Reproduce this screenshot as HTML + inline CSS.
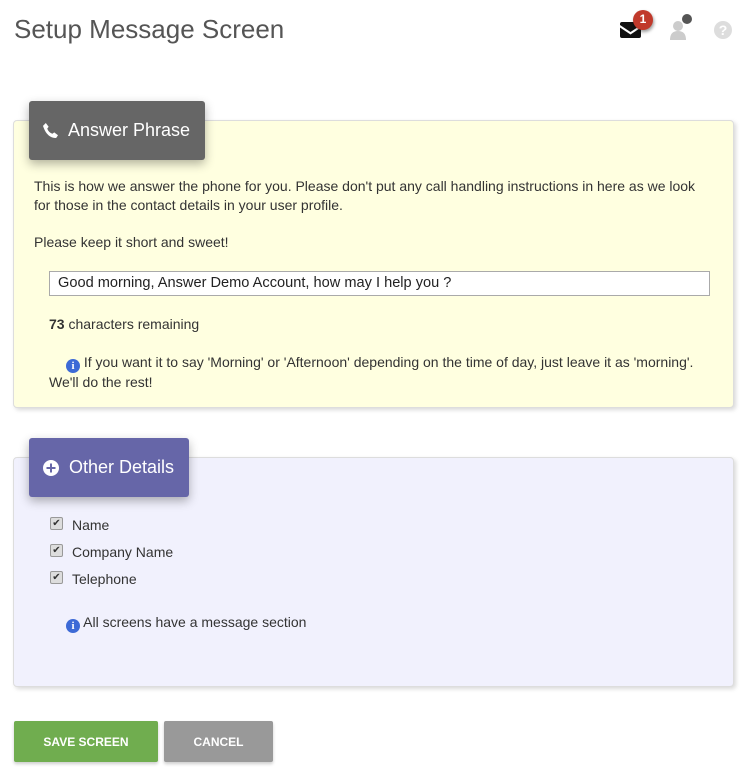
<!DOCTYPE html>
<html><head><style>
body{margin:0;width:742px;height:773px;background:#fff;font-family:"Liberation Sans",sans-serif;color:#333;position:relative;overflow:hidden}
.abs{position:absolute}
h1{position:absolute;left:14px;top:14px;margin:0;font-weight:normal;font-size:26px;color:#555}
.panel{position:absolute;left:13px;width:719px;border:1px solid #ddd;border-radius:4px;box-shadow:2px 2px 4px rgba(0,0,0,.15)}
.hdr{position:absolute;left:29px;color:#fff;font-size:18px;border-radius:3px;box-shadow:0 4px 10px rgba(0,0,0,.3);display:flex;align-items:center;box-sizing:border-box;padding-left:14px}
.t{position:absolute;font-size:14px;line-height:19px;color:#333}
.cb{position:absolute;left:50px;width:11px;height:11px;background:#ddd;border:1px solid #999;border-radius:2px;font-size:10px;line-height:11px;text-align:center;color:#333}
.info{display:inline-block;text-indent:0;width:14px;height:14px;border-radius:50%;background:#3d6ad6;color:#fff;font-size:11px;font-weight:bold;text-align:center;line-height:14px;font-family:"Liberation Serif",serif;vertical-align:-2px}
.btn{position:absolute;top:721px;height:41px;color:#fff;font-size:12px;font-weight:bold;display:flex;align-items:center;justify-content:center;border-radius:2px;box-shadow:0 2px 3px rgba(0,0,0,.2)}
</style></head><body>
<h1>Setup Message Screen</h1>
<svg class="abs" style="left:620px;top:22px" width="21" height="16" viewBox="0 0 21 16"><path d="M0 2 Q0 0 2 0 H19 Q21 0 21 2 V3 L10.5 10 L0 3Z M0 5.5 L10.5 12.5 L21 5.5 V14 Q21 16 19 16 H2 Q0 16 0 14Z" fill="#111"/></svg>
<div class="abs" style="left:633px;top:10px;width:20px;height:20px;border-radius:50%;background:#c0392b;color:#fff;font-size:12px;font-weight:bold;text-align:center;line-height:19px;box-shadow:1px 2px 3px rgba(0,0,0,.4)">1</div>
<svg class="abs" style="left:670px;top:20px" width="18" height="20" viewBox="0 0 18 20"><circle cx="8" cy="6" r="5" fill="#ccc"/><path d="M0 20 Q0 11 8 11 Q16 11 16 20Z" fill="#ccc"/></svg>
<div class="abs" style="left:682px;top:14px;width:10px;height:10px;border-radius:50%;background:#555"></div>
<div class="abs" style="left:714px;top:21px;width:18px;height:18px;border-radius:50%;background:#ddd;color:#fff;font-size:14px;font-weight:bold;text-align:center;line-height:18px">?</div>

<div class="panel" style="top:120px;height:286px;background:#ffffe0"></div>
<div class="hdr" style="top:101px;width:176px;height:59px;background:#666">
<svg width="15" height="15" viewBox="0 0 16 16"><path d="M3 0 L6 4 L4.5 6 Q6 10 10 11.5 L12 10 L16 13 L14 16 Q4 16 0 3Z" fill="#fff"/></svg><span style="margin-left:10px">Answer Phrase</span></div>
<div class="t" style="left:34px;top:177px;width:680px">This is how we answer the phone for you. Please don't put any call handling instructions in here as we look for those in the contact details in your user profile.</div>
<div class="t" style="left:34px;top:233px">Please keep it short and sweet!</div>
<div class="abs" style="left:49px;top:271px;border:1px solid #aaa;background:#fff;font-size:14.6px;line-height:23px;padding-left:8px;box-sizing:border-box;width:661px;height:25px;color:#222">Good morning, Answer Demo Account, how may I help you ?</div>
<div class="t" style="left:49px;top:315px"><b>73</b> characters remaining</div>
<div class="t" style="left:49px;top:353px;width:670px;text-indent:17px"><span class="info">i</span> If you want it to say 'Morning' or 'Afternoon' depending on the time of day, just leave it as 'morning'. We'll do the rest!</div>

<div class="panel" style="top:457px;height:228px;background:#f1f1fd"></div>
<div class="hdr" style="top:438px;width:160px;height:59px;background:#6666a8">
<svg width="16" height="16" viewBox="0 0 16 16"><circle cx="8" cy="8" r="8" fill="#fff"/><path d="M7 3.5h2v3.5h3.5v2H9v3.5H7V9H3.5V7H7Z" fill="#6666a8"/></svg><span style="margin-left:10px">Other Details</span></div>
<div class="cb" style="top:517px">✔</div><div class="t" style="left:72px;top:516px">Name</div>
<div class="cb" style="top:544px">✔</div><div class="t" style="left:72px;top:543px">Company Name</div>
<div class="cb" style="top:571px">✔</div><div class="t" style="left:72px;top:570px">Telephone</div>
<div class="t" style="left:66px;top:613px"><span class="info">i</span> All screens have a message section</div>

<div class="btn" style="left:14px;width:144px;background:#70ad4f">SAVE SCREEN</div>
<div class="btn" style="left:164px;width:109px;background:#999">CANCEL</div>
</body></html>
